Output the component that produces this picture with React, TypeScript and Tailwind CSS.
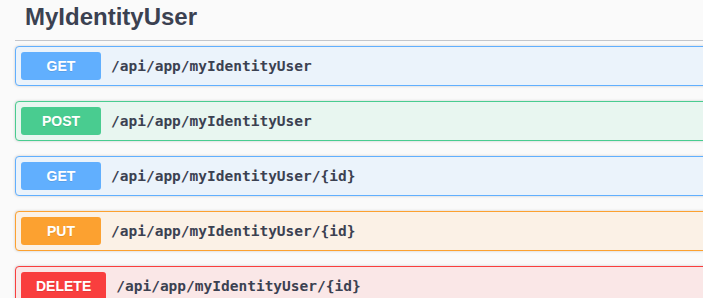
const ops = [
  { method: 'GET', path: '/api/app/myIdentityUser', badge: 'bg-[#61affe]', block: 'bg-[#ebf3fb] border-[#61affe]' },
  { method: 'POST', path: '/api/app/myIdentityUser', badge: 'bg-[#49cc90]', block: 'bg-[#e8f6f0] border-[#49cc90]' },
  { method: 'GET', path: '/api/app/myIdentityUser/{id}', badge: 'bg-[#61affe]', block: 'bg-[#ebf3fb] border-[#61affe]' },
  { method: 'PUT', path: '/api/app/myIdentityUser/{id}', badge: 'bg-[#fca130]', block: 'bg-[#fbf1e6] border-[#fca130]' },
  { method: 'DELETE', path: '/api/app/myIdentityUser/{id}', badge: 'bg-[#f93e3e]', block: 'bg-[#fae7e7] border-[#f93e3e]' },
];

function OpBlock({ method, path, badge, block }: (typeof ops)[number]) {
  return (
    <div className={`mb-[15px] rounded-[4px] border shadow-[0_0_3px_rgba(0,0,0,0.19)] ${block}`}>
      <div className="flex items-center p-[5px]">
        <span
          className={`min-w-[80px] rounded-[3px] px-[15px] py-[6px] text-center text-[14px] leading-[16px] font-bold text-white [text-shadow:0_1px_0_rgba(0,0,0,0.1)] ${badge}`}
          style={{ fontFamily: '"Liberation Sans", Arial, sans-serif' }}
        >
          {method}
        </span>
        <span
          className="px-[10px] pt-[2px] text-[14.5px] font-bold text-[#3b4151]"
          style={{ fontFamily: '"DejaVu Sans Mono", "Liberation Mono", monospace' }}
        >
          {path}
        </span>
      </div>
    </div>
  );
}

export default function App() {
  return (
    <div className="h-[298px] w-[703px] overflow-hidden bg-[#fafafa]">
      <div className="ml-[15px] w-[760px]">
        <h3
          className="mb-[5px] h-[41px] border-b border-[#c4c6cb] pt-[5px] pl-[10px] text-[24px] leading-[24px] font-bold text-[#3b4151]"
          style={{ fontFamily: '"Liberation Sans", Arial, sans-serif' }}
        >
          MyIdentityUser
        </h3>
        {ops.map((op, i) => (
          <OpBlock key={i} {...op} />
        ))}
      </div>
    </div>
  );
}
